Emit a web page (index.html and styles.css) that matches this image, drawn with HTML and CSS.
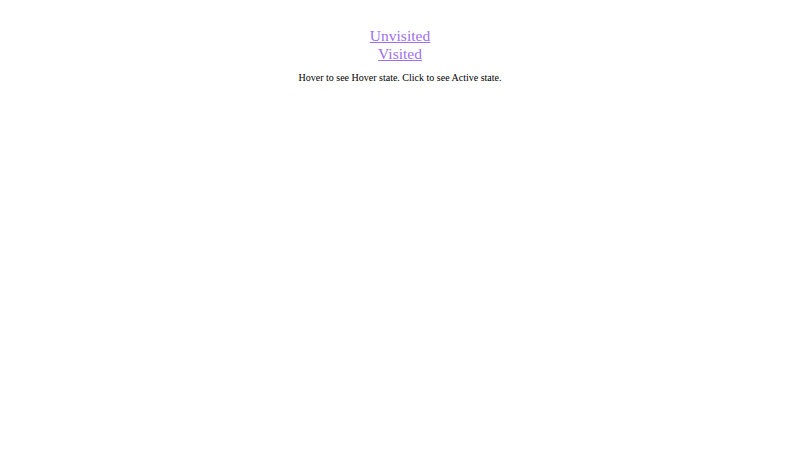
FILE: index.html
```html
<!DOCTYPE html>
<html>
<head>
<meta charset="utf-8">
<link rel="stylesheet" href="styles.css">
</head>
<body>
<div class="wrap">
  <div class="links">
    <a class="link" href="#">Unvisited</a>
    <a class="link" href="#">Visited</a>
  </div>
  <p class="note">Hover to see Hover state. Click to see Active state.</p>
</div>
</body>
</html>
```
FILE: styles.css
```css
html, body {
  margin: 0;
  background: #ffffff;
}
body {
  font-family: "Liberation Serif", "Times New Roman", serif;
  color: #000;
}
.wrap {
  display: flex;
  flex-direction: column;
  align-items: center;
  padding-top: 27px;
}
.links {
  display: flex;
  flex-direction: column;
  align-items: center;
}
.link {
  font-size: 15.5px;
  line-height: 18px;
  color: #9d70ea;
  text-decoration: underline;
}
.note {
  margin: 9px 0 0;
  font-size: 10px;
  line-height: 12px;
}
```
